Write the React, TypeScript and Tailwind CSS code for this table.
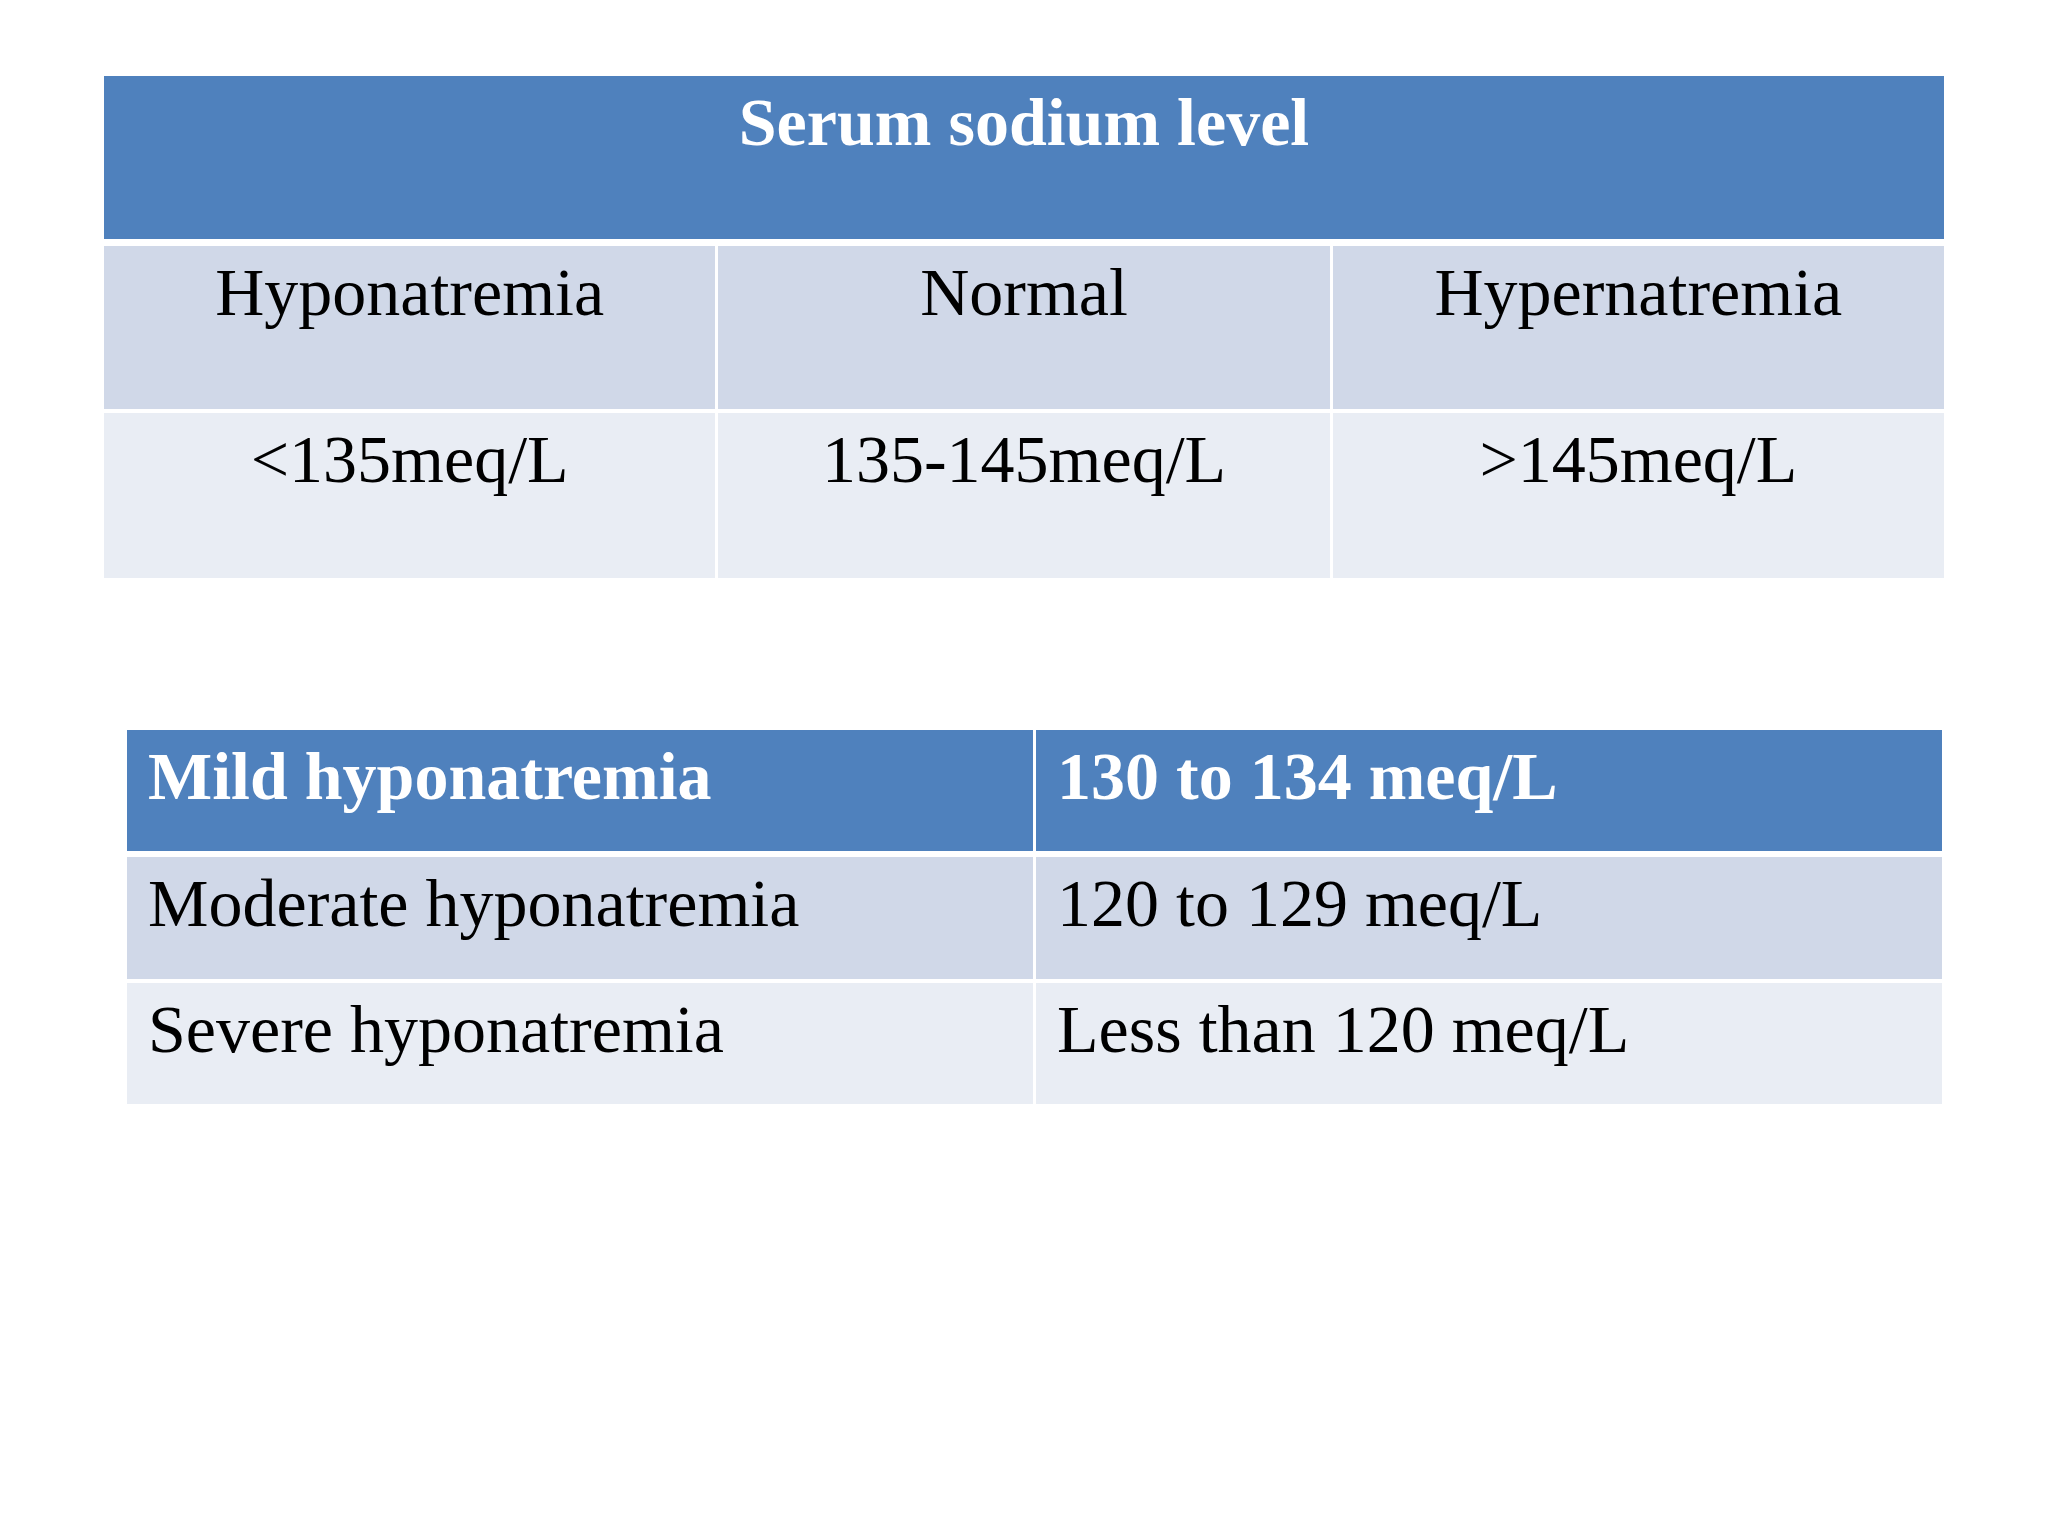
export default function App() {
  const cell1 = "flex-1 text-center pt-[12px]";
  const cell2 = "flex-1 pt-[12px] pl-[21px]";
  return (
    <div className="w-[2048px] h-[1536px] bg-white font-['Liberation_Serif',serif] text-[68px] leading-none text-black pt-[76px]">
      <div className="ml-[104px] w-[1840px] flex flex-col">
        <div className="h-[163px] bg-[#4f81bd] text-white font-bold text-center pt-[12px]">
          Serum sodium level
        </div>
        <div className="mt-[7px] flex gap-[3px] h-[163px]">
          <div className={`${cell1} bg-[#d0d8e8]`}>Hyponatremia</div>
          <div className={`${cell1} bg-[#d0d8e8]`}>Normal</div>
          <div className={`${cell1} bg-[#d0d8e8]`}>Hypernatremia</div>
        </div>
        <div className="mt-[4px] flex gap-[3px] h-[165px]">
          <div className={`${cell1} bg-[#e9edf4]`}>&lt;135meq/L</div>
          <div className={`${cell1} bg-[#e9edf4]`}>135-145meq/L</div>
          <div className={`${cell1} bg-[#e9edf4]`}>&gt;145meq/L</div>
        </div>
      </div>

      <div className="ml-[127px] mt-[152px] w-[1815px] flex flex-col">
        <div className="flex gap-[3px] h-[121px] text-white font-bold">
          <div className={`${cell2} bg-[#4f81bd]`}>Mild hyponatremia</div>
          <div className={`${cell2} bg-[#4f81bd]`}>130 to 134 meq/L</div>
        </div>
        <div className="mt-[6px] flex gap-[3px] h-[122px]">
          <div className={`${cell2} bg-[#d0d8e8]`}>Moderate hyponatremia</div>
          <div className={`${cell2} bg-[#d0d8e8]`}>120 to 129 meq/L</div>
        </div>
        <div className="mt-[4px] flex gap-[3px] h-[121px]">
          <div className={`${cell2} bg-[#e9edf4]`}>Severe hyponatremia</div>
          <div className={`${cell2} bg-[#e9edf4]`}>Less than 120 meq/L</div>
        </div>
      </div>
    </div>
  );
}
